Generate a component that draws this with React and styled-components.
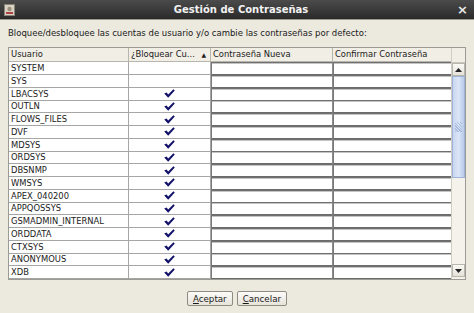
import React from "react";
import styled, { createGlobalStyle } from "styled-components";

const users = [
  { name: "SYSTEM", locked: false },
  { name: "SYS", locked: false },
  { name: "LBACSYS", locked: true },
  { name: "OUTLN", locked: true },
  { name: "FLOWS_FILES", locked: true },
  { name: "DVF", locked: true },
  { name: "MDSYS", locked: true },
  { name: "ORDSYS", locked: true },
  { name: "DBSNMP", locked: true },
  { name: "WMSYS", locked: true },
  { name: "APEX_040200", locked: true },
  { name: "APPQOSSYS", locked: true },
  { name: "GSMADMIN_INTERNAL", locked: true },
  { name: "ORDDATA", locked: true },
  { name: "CTXSYS", locked: true },
  { name: "ANONYMOUS", locked: true },
  { name: "XDB", locked: true },
  { name: "", locked: false },
];

const Check = () => (
  <svg width="11" height="9" viewBox="0 0 11 9">
    <path d="M0.2 4.6 L2.6 3.4 L4.2 5.4 L9.4 0.2 L10.8 1.5 L4.2 8.8 Z" fill="#12126a" />
  </svg>
);

const AppIcon = () => (
  <svg width="11" height="12" viewBox="0 0 11 12">
    <rect x="0.5" y="0.5" width="10" height="11" fill="#d8d2c4" stroke="#8a8478" />
    <circle cx="5.5" cy="5" r="2.2" fill="#9a8f7a" />
    <rect x="2" y="8" width="7" height="2" fill="#b04040" />
  </svg>
);

const Arrow = ({ down }) => (
  <svg width="7" height="4" viewBox="0 0 7 4">
    <path d={down ? "M0 0 L7 0 L3.5 4 Z" : "M0 4 L7 4 L3.5 0 Z"} fill="#222" />
  </svg>
);

export default function App() {
  return (
    <Window>
      <GlobalStyle />
      <TitleBar>
        <AppIcon />
        <Title>Gestión de Contraseñas</Title>
        <Close>×</Close>
      </TitleBar>
      <Content>
        <Label>
          Bloquee/desbloquee las cuentas de usuario y/o cambie las contraseñas por defecto:
        </Label>
        <TableFrame>
          <Grid>
            <HeaderRow>
              <HeaderCell>Usuario</HeaderCell>
              <HeaderCell>
                ¿Bloquear Cu...
                <SortMark>▲</SortMark>
              </HeaderCell>
              <HeaderCell>Contraseña Nueva</HeaderCell>
              <HeaderCell>Confirmar Contraseña</HeaderCell>
            </HeaderRow>
            <Body>
              {users.map((u, i) => (
                <Row key={i}>
                  <NameCell>{u.name}</NameCell>
                  <CheckCell>{u.locked && <Check />}</CheckCell>
                  <PasswordCell />
                  <PasswordCell />
                </Row>
              ))}
            </Body>
          </Grid>
          <ScrollBar>
            <ScrollCorner />
            <ScrollButton>
              <Arrow />
            </ScrollButton>
            <Thumb>
              <Grip />
            </Thumb>
            <Track />
            <ScrollButton>
              <Arrow down />
            </ScrollButton>
            <ScrollRest />
          </ScrollBar>
        </TableFrame>
        <Buttons>
          <Button>
            <u>A</u>ceptar
          </Button>
          <Button>
            <u>C</u>ancelar
          </Button>
        </Buttons>
      </Content>
    </Window>
  );
}

const GlobalStyle = createGlobalStyle`
  body {
    margin: 0;
    background: #ece9df;
  }
`;

const Window = styled.div`
  width: 474px;
  height: 313px;
  background: #ece9df;
  display: flex;
  flex-direction: column;
  font-family: "DejaVu Sans", sans-serif;
  color: #1a1a1a;
  overflow: hidden;
`;

const TitleBar = styled.div`
  height: 19px;
  display: flex;
  align-items: center;
  padding: 0 6px 0 4px;
  background: linear-gradient(#4b4b4b, #2a2a2a);
  border-bottom: 1px solid #9d9a92;
`;

const Title = styled.div`
  flex: 1;
  text-align: center;
  color: #f2f2f2;
  font-weight: bold;
  font-size: 10px;
  padding-left: 10px;
`;

const Close = styled.div`
  color: #e8e8e8;
  font-size: 13px;
  font-weight: bold;
  line-height: 1;
`;

const Content = styled.div`
  display: flex;
  flex-direction: column;
  padding: 0 8px;
`;

const Label = styled.div`
  font-size: 8.5px;
  height: 27px;
  line-height: 27px;
  white-space: nowrap;
`;

const TableFrame = styled.div`
  display: flex;
  width: 458px;
  height: 233px;
  border: 1px solid #9c9a94;
  box-sizing: border-box;
  background: #fff;
`;

const Grid = styled.div`
  width: 445px;
  display: flex;
  flex-direction: column;
  overflow: hidden;
`;

const HeaderRow = styled.div`
  display: grid;
  grid-template-columns: 120px 82px 122px 121px;
  height: 13px;
  background: #f1eee6;
  border-bottom: 1px solid #b8b5ad;
  flex-shrink: 0;
`;

const HeaderCell = styled.div`
  font-size: 8.4px;
  line-height: 13px;
  padding-left: 2px;
  border-right: 1px solid #b8b5ad;
  white-space: nowrap;
  overflow: hidden;
  display: flex;
  justify-content: space-between;
`;

const SortMark = styled.span`
  font-size: 6px;
  padding-right: 4px;
`;

const Body = styled.div`
  flex: 1;
  overflow: hidden;
`;

const Row = styled.div`
  display: grid;
  grid-template-columns: 120px 82px 122px 121px;
  height: 12.75px;
`;

const NameCell = styled.div`
  font-size: 8.4px;
  line-height: 12px;
  padding-left: 2px;
  border-right: 1px solid #a6a6a6;
  border-bottom: 1px solid #a6a6a6;
  white-space: nowrap;
`;

const CheckCell = styled.div`
  display: flex;
  align-items: center;
  justify-content: center;
  border-right: 1px solid #a6a6a6;
  border-bottom: 1px solid #a6a6a6;
`;

const PasswordCell = styled.div`
  background: #fff;
  border-top: 1px solid #707070;
  border-left: 1px solid #7a7a7a;
  border-bottom: 1px solid #6c6c6c;
  border-right: 1px solid #8a8a8a;
  box-shadow: inset 0 1px 0 #c4c4c4;
`;

const ScrollBar = styled.div`
  width: 13px;
  display: flex;
  flex-direction: column;
  background: #f3f1e8;
  border-left: 1px solid #d0cdc4;
`;

const ScrollCorner = styled.div`
  height: 14px;
  background: #f1eee6;
  border-bottom: 1px solid #c8c5bd;
`;

const ScrollButton = styled.div`
  height: 11px;
  display: flex;
  align-items: center;
  justify-content: center;
  background: linear-gradient(#fbfaf6, #e4e1d8);
  border: 1px solid #b9b6ad;
`;

const Thumb = styled.div`
  height: 100px;
  background: linear-gradient(90deg, #c7d6ef, #dbe6f7 50%, #b9cbe9);
  border: 1px solid #9fb3d6;
  display: flex;
  align-items: center;
  justify-content: center;
`;

const Grip = styled.div`
  width: 7px;
  height: 10px;
  background: repeating-linear-gradient(45deg, #a9bcdf 0 1px, transparent 1px 2px);
`;

const Track = styled.div`
  flex: 1;
  background: #f4f2ea;
`;

const ScrollRest = styled.div`
  height: 2px;
`;

const Buttons = styled.div`
  display: flex;
  justify-content: center;
  gap: 4px;
  margin-top: 11px;
`;

const Button = styled.div`
  height: 15px;
  padding: 0 5px;
  font-size: 8.7px;
  line-height: 14px;
  border: 1px solid #8e8b82;
  border-radius: 2px;
  background: linear-gradient(#fcfbf8, #e6e3da);
  box-sizing: border-box;
  color: #1a1a1a;
`;
